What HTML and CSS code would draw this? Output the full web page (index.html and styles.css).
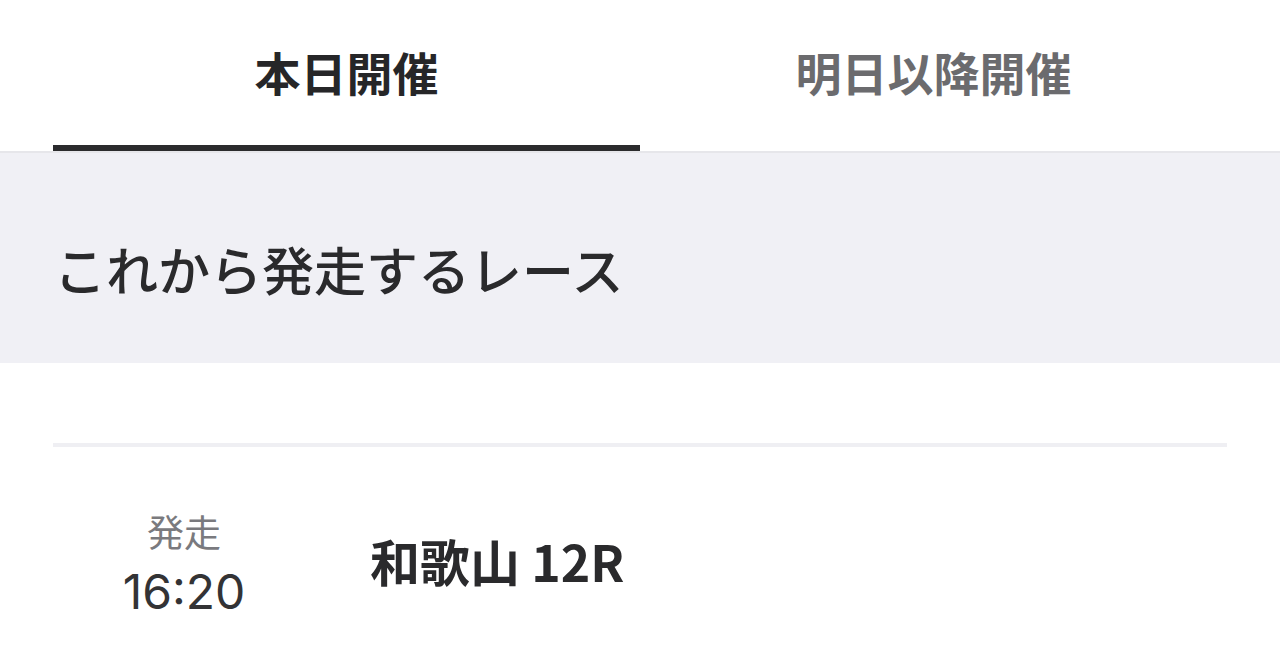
FILE: index.html
```html
<!DOCTYPE html>
<html lang="ja">
<head>
<meta charset="utf-8">
<title>レース一覧</title>
<link rel="stylesheet" href="styles.css">
</head>
<body>
<nav class="tabs">
  <div class="tab tab-active"><span class="tab-label">本日開催</span></div>
  <div class="tab"><span class="tab-label">明日以降開催</span></div>
</nav>
<header class="section-header">
  <h2 class="section-title">これから発走するレース</h2>
</header>
<main class="race-list">
  <div class="divider"></div>
  <div class="race-row">
    <div class="race-time">
      <span class="time-label">発走</span>
      <span class="time-value">16:20</span>
    </div>
    <div class="race-name">和歌山 12R</div>
  </div>
</main>
</body>
</html>
```
FILE: styles.css
```css
* { box-sizing: border-box; }
html, body {
  margin: 0;
  padding: 0;
  background: #ffffff;
  font-family: "Noto Sans CJK JP", "Noto Sans", sans-serif;
  color: #2a2a2c;
}
.tabs {
  display: flex;
  padding: 0 53px;
  height: 153px;
  border-bottom: 2px solid #e6e6ea;
}
.tab {
  flex: 1;
  display: flex;
  justify-content: center;
  padding-top: 48px;
  border-bottom: 6px solid transparent;
}
.tab-active {
  border-bottom-color: #2b2b2d;
}
.tab-label {
  font-size: 46px;
  line-height: 1;
  font-weight: 700;
  color: #6b6b6e;
}
.tab-active .tab-label {
  color: #262628;
}
.section-header {
  background: #f0f0f5;
  height: 210px;
  padding: 90px 0 0 54px;
}
.section-title {
  margin: 0;
  font-size: 52px;
  line-height: 1;
  font-weight: 500;
  color: #2a2a2c;
}
.race-list {
  padding: 80px 53px 0;
}
.divider {
  height: 4px;
  background: #efeff3;
}
.race-row {
  display: flex;
  align-items: center;
  padding-top: 66px;
}
.race-time {
  width: 262px;
  display: flex;
  flex-direction: column;
  align-items: center;
}
.time-label {
  font-size: 37px;
  line-height: 1;
  color: #7a7a7e;
}
.time-value {
  margin-top: 18px;
  font-family: "Inter", "Noto Sans", sans-serif;
  font-size: 48px;
  line-height: 1;
  color: #333335;
}
.race-name {
  margin-left: 55px;
  margin-top: -10px;
  font-size: 50px;
  line-height: 1;
  font-weight: 700;
  color: #2a2a2c;
}
```
